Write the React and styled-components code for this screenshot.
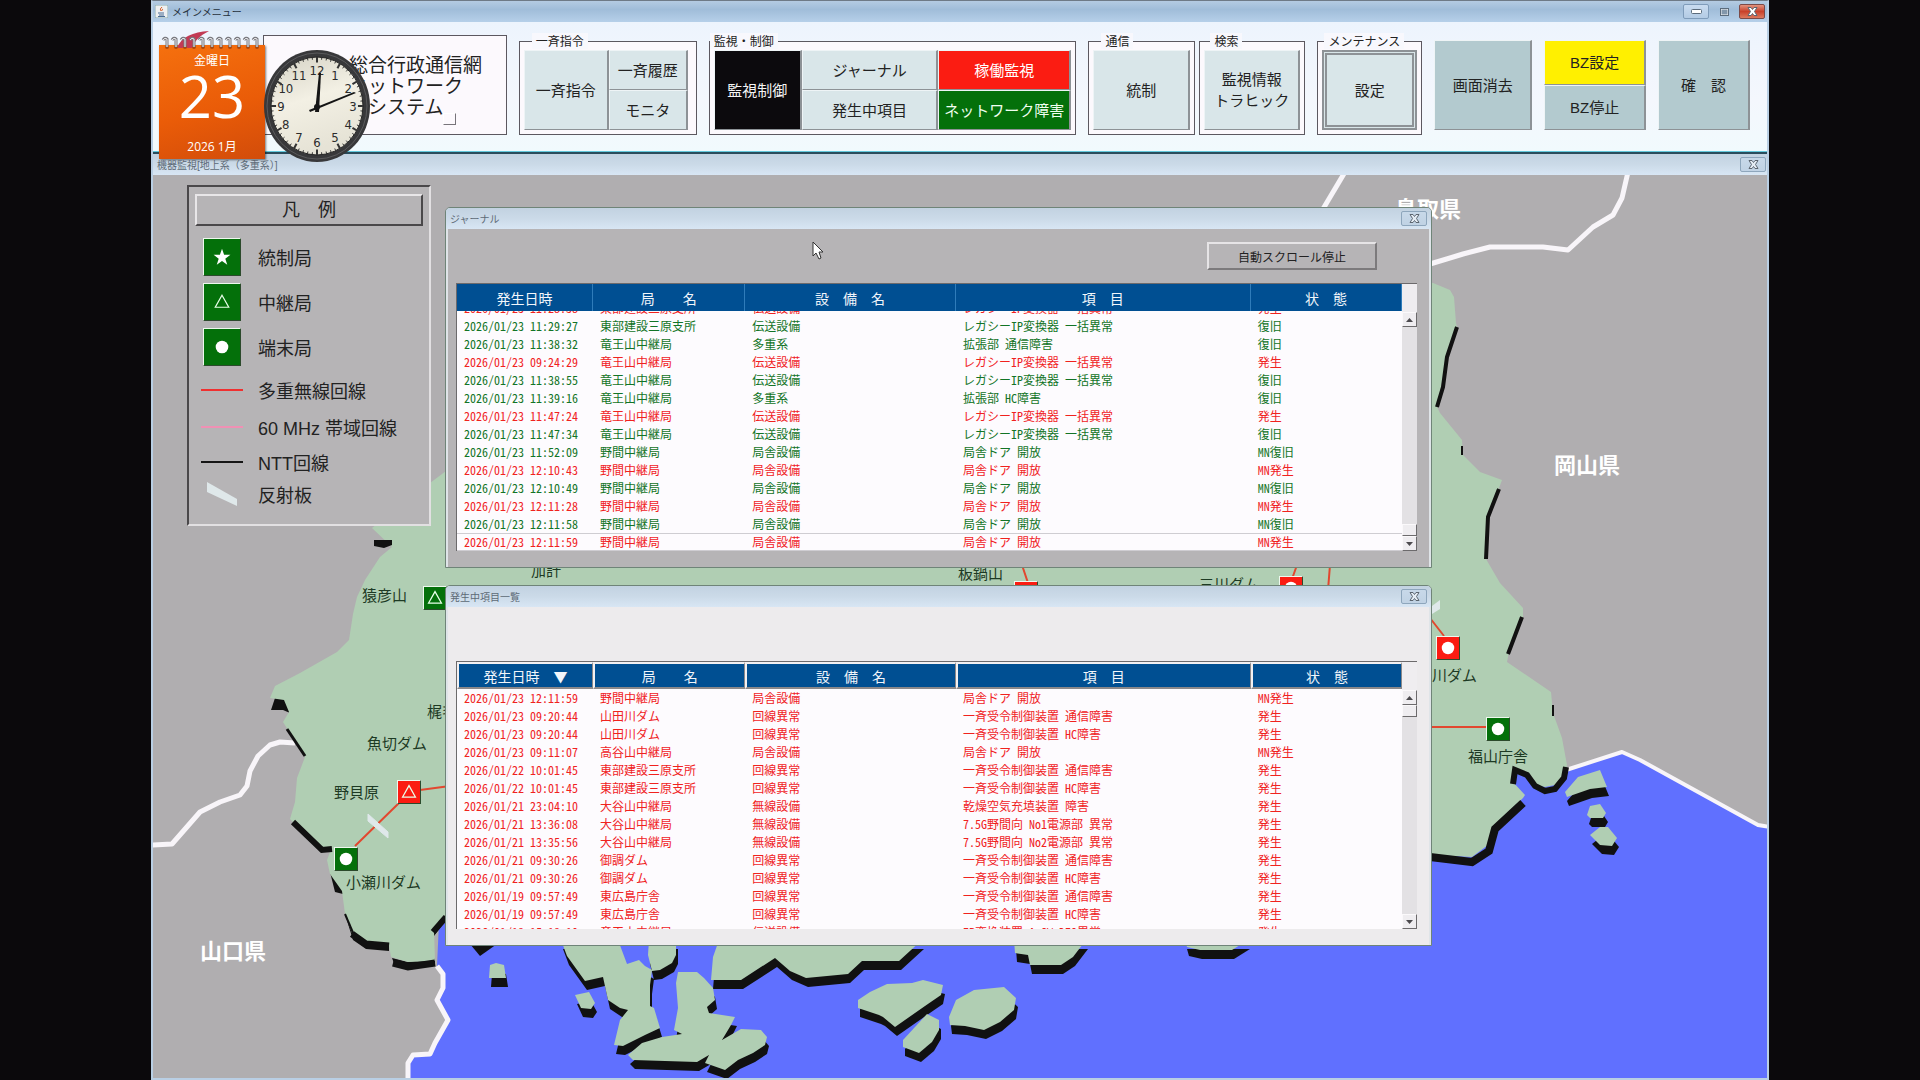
import React, { useEffect, useRef } from 'react'
import styled, { createGlobalStyle, css } from 'styled-components'

const GlobalStyle = createGlobalStyle`
  * { box-sizing: border-box; }
  body {
    margin: 0;
    background: #0b090c;
    color: #222;
    font-family: "Liberation Sans", "Noto Sans CJK JP", sans-serif;
  }
  button { font-family: inherit; color: inherit; padding: 0; margin: 0; }
`

const LAND = '#b0ceb3'
const SEA = '#6070ff'
const GREEN = '#04700a'
const RED = '#fb1c12'

/* ---------- shell ---------- */

const Shell = styled.div`
  position: relative;
  display: flex;
  flex-direction: column;
  width: calc(100% - 302px);
  height: 100vh;
  margin: 0 auto;
  border: 2px solid #b9cfe4;
  border-top: 1px solid #6e7a86;
  overflow: hidden;
`

const TitleBar = styled.header`
  display: flex;
  align-items: center;
  gap: 2px;
  flex: none;
  height: 21px;
  padding: 0 2px;
  font-size: 10px;
  color: #26313c;
  background: linear-gradient(#b4cbe2, #a0bdd9 40%, #b6d0e9);
`

const TitleText = styled.h1`
  flex: 1;
  margin: 0 0 0 2px;
  font-size: 10px;
  font-weight: 400;
`

const CaptionButton = styled.button`
  display: flex;
  align-items: center;
  justify-content: center;
  width: 26px;
  height: 15px;
  border: 1px solid ${(p) => (p.$close ? '#7c4a48' : p.$flat ? 'transparent' : '#7f9cba')};
  border-radius: 2px;
  background: ${(p) => (p.$close
    ? 'linear-gradient(#e2937f, #c8412b 50%, #dd7a5e)'
    : p.$flat ? 'transparent' : 'linear-gradient(#c9dcf0, #b3cbe4)')};
`

const CloseGlyph = ({ fill = '#fff', stroke = '#5c6670' }) => (
  <svg width="11" height="9" viewBox="0 0 11 9" aria-hidden="true">
    <path d="M1 .5h3l1.500 2 1.500-2h3L7.500 4.500l2.500 4H7L5.500 6.500 4 8.500H1l2.500-4z" fill={fill} stroke={stroke} strokeWidth="1" />
  </svg>
)

const Toolbar = styled.div`
  display: flex;
  align-items: flex-end;
  gap: 12px;
  flex: none;
  height: 132px;
  padding: 0 17px 17px 110px;
  background: linear-gradient(#edf4fd, #f4f7fd 60%, #f1fafd);
  border-bottom: 2px solid #2a4c5c;
  box-shadow: inset 0 -1px #62c8dc;
  white-space: nowrap;
`

const LogoBox = styled.div`
  position: relative;
  width: 244px;
  height: 100px;
  padding: 19px 0 0 85px;
  border: 1px solid #5c5860;
  background: #fcf9fd;
  font-size: 19px;
  line-height: 21px;
  white-space: pre;
`

// little unlabeled push button in the corner of the logo box
const CornerButton = styled.button`
  position: absolute;
  right: 50px;
  bottom: 9px;
  width: 13px;
  height: 12px;
  border: 1px solid;
  border-color: #fff #77747a #77747a #fff;
  background: #fcf9fd;
`

const Group = styled.fieldset`
  display: grid;
  grid-template-columns: ${(p) => p.$cols || '1fr'};
  width: ${(p) => p.$w}px;
  height: 102px;
  min-width: 0;
  margin: 0;
  padding: 1px ${(p) => p.$padRight || 4}px 4px 4px;
  border: 1px solid #5c5860;
  background: #fcf9fd;
`

const GroupLegend = styled.legend`
  margin-left: ${(p) => p.$indent || 6}px;
  padding: 2px 4px 0;
  font-size: 12px;
  line-height: 14px;
  background: #f8f8fd;
`

const PairRow = styled.div`
  display: flex;
  gap: 4px;
`

const SideButtons = styled.div`
  display: grid;
  width: ${(p) => p.$w}px;
  height: 90px;
  margin-bottom: 5px;
`

const tones = {
  pale: css`background: #d9e6e9;`,
  black: css`background: #0c0a0d; color: #f4f4f4;`,
  red: css`background: ${RED}; color: #fff;`,
  green: css`background: ${GREEN}; color: #f0fff0;`,
  teal: css`background: #b3cacf;`,
  yellow: css`background: #fff000;`,
}

const PanelButton = styled.button`
  grid-row: ${(p) => (p.$tall ? 'span 2' : 'auto')};
  border: 1px solid;
  border-color: #eef4f6 #8d9296 #8d9296 #eef4f6;
  border-right-width: 2px;
  font-size: 15px;
  line-height: 21px;
  white-space: pre-line;
  ${(p) => tones[p.$tone || 'pale']}
  ${(p) => p.$ridge && css`
    border: 5px double #8d9296;
  `}
`

/* ---------- gadgets ---------- */

const CalendarGadget = styled.section`
  position: absolute;
  left: 6px;
  top: 30px;
  width: 106px;
  height: 128px;
`

const CalendarRings = styled.svg`
  position: absolute;
  left: 0;
  top: 0;
`

const CalendarPage = styled.div`
  display: flex;
  flex-direction: column;
  align-items: center;
  height: 114px;
  margin-top: 14px;
  padding: 9px 0 5px;
  background: linear-gradient(165deg, #f5700e, #ea5c08 55%, #d24c0a);
  box-shadow: 1px 1px 2px rgba(0, 0, 0, 0.5);
  color: #fff;
  font-family: "Open Sans", "Noto Sans CJK JP", sans-serif;
  font-size: 12px;
  line-height: 14px;
`

const CalendarDay = styled.div`
  margin-bottom: auto;
  font-size: 58px;
  font-weight: 500;
  line-height: 56px;
`

const ClockGadget = styled.svg`
  position: absolute;
  left: 109px;
  top: 46px;
`

const Calendar = () => (
  <CalendarGadget>
    <CalendarPage>
      <span>金曜日</span>
      <CalendarDay>23</CalendarDay>
      <span>2026 1月</span>
    </CalendarPage>
    <CalendarRings width="106" height="20" viewBox="0 0 106 20" aria-hidden="true">
      <path d="M18 17C22 6 34 1 50 0 40 5 36 10 33 17z" fill="#c23a54" />
      {Array.from({ length: 11 }, (_, i) => (
        <g key={i} transform={`translate(${4 + i * 9} 6)`}>
          <circle cx="4" cy="10" r="2" fill="#a84810" />
          <path d="M0 3Q2 0 4 2V10" fill="none" stroke="#77777c" strokeWidth="3" />
          <path d="M0 3Q2 0 4 2V10" fill="none" stroke="#ececf0" strokeWidth="1" />
        </g>
      ))}
    </CalendarRings>
  </CalendarGadget>
)

const Clock = () => (
  <ClockGadget width="110" height="118" viewBox="0 0 110 118" role="img" aria-label="12:12">
    <defs>
      <linearGradient id="face" x1="0" y1="0" x2="0.300" y2="1">
        <stop offset="0" stopColor="#d6d3c6" />
        <stop offset="0.500" stopColor="#f3f0e4" />
        <stop offset="1" stopColor="#e6e3d6" />
      </linearGradient>
    </defs>
    <ellipse cx="55" cy="59" rx="53" ry="56" fill="#38383a" />
    <ellipse cx="55" cy="59" rx="50" ry="53" fill="none" stroke="#5a5a5c" strokeWidth="1" />
    <ellipse cx="55" cy="59" rx="46" ry="49" fill="url(#face)" stroke="#222" strokeWidth="1" />
    {Array.from({ length: 60 }, (_, i) => {
      const a = (i * Math.PI) / 30
      const r = i % 5 ? 0.95 : 0.89
      return (
        <line
          key={i}
          x1={55 + 46 * Math.sin(a)}
          y1={59 - 49 * Math.cos(a)}
          x2={55 + 46 * r * Math.sin(a)}
          y2={59 - 49 * r * Math.cos(a)}
          stroke="#333"
          strokeWidth={i % 5 ? 1 : 2}
        />
      )
    })}
    {Array.from({ length: 12 }, (_, i) => {
      const a = ((i + 1) * Math.PI) / 6
      return (
        <text
          key={i}
          x={55 + 36 * Math.sin(a)}
          y={64 - 36 * Math.cos(a)}
          textAnchor="middle"
          fontFamily='"DejaVu Sans Condensed", "Liberation Sans", sans-serif'
          fontSize="13"
          fill="#2c2c2c"
        >
          {i + 1}
        </text>
      )
    })}
    <path d="M53 65l4 0 2-39-2 0z" fill="#151515" />
    <path d="M47 63l1 2 46-19-2-1z" fill="#151515" />
    <circle cx="55" cy="60" r="3" fill="#151515" />
  </ClockGadget>
)

/* ---------- map ---------- */

const ChildTitle = styled.div`
  display: flex;
  align-items: center;
  flex: none;
  height: 21px;
  padding: 0 ${(p) => p.$edge || 4}px 0 4px;
  font-size: 10px;
  color: #5d6a76;
  background: linear-gradient(#c2d2e1, #cbdae8 50%, #d8e6f4);

  h2 {
    flex: 1;
    margin: 0;
    font-size: 10px;
    font-weight: 400;
  }
`

const MapArea = styled.main`
  position: relative;
  flex: 1;
  min-height: 0;
  overflow: hidden;
  background: #b0aeb0;
`

const MapCanvas = styled.svg`
  position: absolute;
  inset: 0;
  width: 100%;
  height: 100%;
`

const Node = styled.div`
  position: absolute;
  left: ${(p) => p.$x - 153}px;
  top: ${(p) => p.$y - 175}px;
`

const Place = styled(Node)`
  font-size: 15px;
  line-height: 18px;
  color: #1d3a24;
  white-space: nowrap;
`

const Prefecture = styled(Node)`
  font-size: 22px;
  line-height: 26px;
  font-weight: 700;
  color: #fff;
  white-space: nowrap;
`

const ISLANDS = [
  '490,965 496,963 504,965 506,978 489,978',
  '561,940 567,956 585,981 603,977 608,1000 620,1008 628,1010 620,1020 614,1045 623,1046 645,1035 660,1028 654,1008 650,1006 650,985 652,970 645,966 639,960 627,964 618,940',
  '649,940 648,955 652,971 660,970 672,963 676,955 676,940',
  '678,972 697,972 704,978 713,988 715,1000 707,1007 709,1013 735,1017 731,1025 722,1040 741,1029 761,1030 767,1037 765,1045 753,1053 738,1060 725,1070 705,1063 709,1055 697,1062 633,1060 628,1055 642,1043 662,1037 682,1034 674,1030 678,1008 676,983',
  '575,995 589,992 595,1003 591,1009 581,1008',
  '719,940 713,957 711,980 741,980 775,958 790,971 806,978 848,974 862,961 899,961 922,940',
  '858,1000 870,992 887,984 912,983 923,980 943,985 941,995 925,1006 895,1027 883,1017 879,1015 858,1008',
  '927,1014 939,1020 939,1030 932,1042 919,1053 903,1047 903,1040 915,1027',
  '974,990 1004,987 1016,998 1014,1010 1000,1022 984,1030 965,1026 950,1025 949,1017 956,1000',
  '1014,940 1015,953 1028,955 1030,965 1061,965 1073,957 1086,940',
  '1185,940 1187,947 1200,950 1232,950 1248,940',
  '1565,792 1578,777 1600,770 1607,787 1590,789 1567,797',
  '1587,815 1590,806 1600,804 1606,813 1603,818 1590,818',
  '1590,835 1600,827 1608,827 1617,838 1612,846 1600,845',
]

const MAINLAND = 'M446 471L430 483 372 528 392 547 380 557 365 580 357 597 353 614 349 640 337 652 300 673 275 686 270 698 284 700 289 712 283 722 305 757 297 778 295 802 290 819 322 852 332 847 327 860 330 874 342 891 345 914 352 933 366 943 389 945 391 957 408 962 435 961 434 931 446 914 480 938 1433 855 1472 857 1488 845 1495 825 1523 798 1525 795 1513 782 1515 770 1527 773 1535 785 1545 787 1555 785 1563 776 1567 765 1562 738 1553 713 1551 692 1507 662 1509 652 1523 617 1523 608 1500 583 1486 559 1488 517 1502 480 1480 472 1463 455 1462 440 1440 413 1437 407 1447 357 1457 327 1456 323 1454 297 1450 290 1433 283 1000 250z'

const RegionMap = () => (
  <MapCanvas viewBox="153 175 1614 904" preserveAspectRatio="xMinYMin slice" aria-hidden="true">
    <path d="M440 900L437 966 443 974 443 988 437 1000 448 1020 435 1043 430 1054 413 1055 408 1063 408 1085H1775V827L1758 825 1640 760 1622 752 1568 770 1400 780z" fill={SEA} />
    <g fill="none" stroke="#f8f5f9" strokeWidth="5" strokeLinejoin="round">
      <path d="M152 845L172 844 200 812 220 802 240 795 247 786 250 771 258 756 270 745 280 742 295 743" />
      <path d="M437 966L443 974 443 988 437 1000 448 1020 435 1043 430 1054 413 1055 408 1063 408 1080" />
      <path d="M1345 172L1323 209" />
      <path d="M1628 172L1622 198 1613 215 1593 227 1568 250 1543 247 1490 247 1463 254 1430 264" />
      <path d="M1566 770L1622 752 1640 760 1758 825 1770 827" strokeWidth="4" />
    </g>
    <g fill="#111" stroke="none">
      <path d="M271 710L275 698 286 698 290 713 283 710z" />
      <path d="M345 914L353 931 367 940 389 942V951L366 949 353 940z" />
      <path d="M392 958L408 962 435 958V965L408 970 395 966z" />
      <path d="M330 872L343 886V894L335 892z" />
      <path d="M470 944H497L480 956z" />
      <path d="M433 926L446 905V920L434 936z" />
    </g>
    <path d={MAINLAND} fill={LAND} />
    <g fill="none" stroke="#111" strokeWidth="4">
      <path d="M287 729L305 756" strokeWidth="3" />
      <path d="M293 822L322 850 332 849" strokeWidth="6" />
      <path d="M433 932L446 917" strokeWidth="6" />
      <path d="M352 934L366 944 389 946M393 963L408 967 435 963" strokeWidth="7" />
      <path d="M345 914L354 935" strokeWidth="2" />
      <path d="M1457 327L1447 357 1443 387 1437 407M1499 489L1488 517 1486 559M1522 617L1508 654" />
      <path d="M1462 446V455M1553 705V716" strokeWidth="2" />
      <path d="M1566 767L1564 778 1555 789 1545 791 1535 786 1527 775 1515 770 1513 784" strokeWidth="6" />
      <path d="M1523 803L1495 829 1489 851 1472 862 1430 857" strokeWidth="8" />
    </g>
    <path d="M374 540H392V545L384 548 374 546z" fill="#111" />
    <g fill="#111" transform="translate(2 9)">
      {ISLANDS.map((pts) => <polygon key={pts} points={pts} />)}
    </g>
    <g fill={LAND}>
      {ISLANDS.map((pts) => <polygon key={pts} points={pts} />)}
    </g>
    <g stroke="#e2472f" strokeWidth="2">
      <path d="M355 846L399 803M420 790L450 786M1430 727H1487M1430 618L1444 636M1022 565L1028 583M1297 565L1292 579M1330 565L1328 590" fill="none" />
    </g>
    <path d="M368 814L388 832V838L368 821z" fill="#dfe8ea" stroke="#dfe8ea" />
    <path d="M1432 606L1440 600V609L1432 614z" fill="#dfe8ea" />
  </MapCanvas>
)

const StationFrame = styled.svg`
  display: block;
  flex: none;
  width: ${(p) => p.$size}px;
  height: ${(p) => p.$size}px;
  border: 1px solid;
  border-color: #eef8ee #2c4a2c #2c4a2c #eef8ee;
  background: ${(p) => (p.$alarm ? RED : GREEN)};
`

const Station = ({ kind, alarm, size = 24 }) => {
  const large = size > 30
  return (
    <StationFrame viewBox="0 0 24 24" $size={size} $alarm={alarm} aria-hidden="true">
      {kind === 'star' && <path d="M12 6.500l1.400 4h4.200l-3.400 2.600 1.300 4.100-3.500-2.500-3.500 2.500 1.300-4.100L6.400 10.500h4.200z" fill="#fff" />}
      {kind === 'triangle' && (
        <path d={large ? 'M12 7.500L16.500 15.500H7.500z' : 'M12 5L19 17.500H5z'} fill="none" stroke="#eaffea" strokeWidth={large ? 0.8 : 1.4} />
      )}
      {kind === 'circle' && <circle cx="12" cy="12" r={large ? 4.2 : 6.8} fill="#fff" />}
    </StationFrame>
  )
}

/* ---------- legend panel ---------- */

const LegendPanel = styled.aside`
  position: absolute;
  left: 34px;
  top: 10px;
  width: 244px;
  padding: 7px 6px 17px;
  border: 2px solid;
  border-color: #4a484a #e2e0e2 #e2e0e2 #4a484a;
  background: #b6b4b6;
`

const LegendTitle = styled.h3`
  margin: 0 0 8px;
  border: 2px solid;
  border-color: #e8e6e8 #4a484a #4a484a #e8e6e8;
  font-size: 18px;
  font-weight: 400;
  line-height: 28px;
  text-align: center;
`

const LegendRow = styled.div`
  display: grid;
  grid-template-columns: 42px 1fr;
  align-items: center;
  column-gap: 15px;
  height: ${(p) => p.$h}px;
  padding-left: 6px;
  font-size: 18px;
  white-space: nowrap;
`

const LineSample = styled.span`
  height: 2px;
  background: ${(p) => p.$color};
`

const Centered = styled.span`
  display: flex;
  justify-content: center;
`

const Legend = () => (
  <LegendPanel>
    <LegendTitle>凡　例</LegendTitle>
    <LegendRow $h={45}><Centered><Station kind="star" size={38} /></Centered>統制局</LegendRow>
    <LegendRow $h={45}><Centered><Station kind="triangle" size={38} /></Centered>中継局</LegendRow>
    <LegendRow $h={45}><Centered><Station kind="circle" size={38} /></Centered>端末局</LegendRow>
    <LegendRow $h={41}><LineSample $color="#f03030" />多重無線回線</LegendRow>
    <LegendRow $h={34}><LineSample $color="#f090b4" />60 MHz 帯域回線</LegendRow>
    <LegendRow $h={36}><LineSample $color="#151515" />NTT回線</LegendRow>
    <LegendRow $h={27}>
      <Centered>
        <svg width="32" height="26" viewBox="0 0 32 26" aria-hidden="true">
          <path d="M1 1L31 18V25L1 11z" fill="#dfe8ea" />
        </svg>
      </Centered>
      反射板
    </LegendRow>
  </LegendPanel>
)

/* ---------- floating windows ---------- */

const WindowFrame = styled.section`
  position: absolute;
  left: 292px;
  top: ${(p) => p.$top}px;
  width: 987px;
  border: 1px solid #6f8478;
  border-radius: 5px 5px 0 0;
  overflow: hidden;
  background: ${(p) => (p.$light ? '#edebed' : '#b6b4b6')};
  box-shadow: inset -2px 0 #dfe4e8, inset 2px 0 #dfe4e8;
`

const WindowTools = styled.div`
  display: flex;
  align-items: center;
  justify-content: flex-end;
  height: 54px;
  padding-right: 54px;
`

const ScrollStopButton = styled.button`
  width: 170px;
  height: 28px;
  border: 2px solid;
  border-color: #e6e4e6 #7c7a7c #7c7a7c #e6e4e6;
  background: #b6b4b6;
  font-size: 12px;
`

const ListFrame = styled.div`
  display: flex;
  height: 268px;
  margin: 0 14px 16px 10px;
  border-left: 1px solid #6c6a6c;
  border-top: 1px solid #6c6a6c;
`

const Scroller = styled.div`
  flex: 1;
  overflow: hidden;
  background: #fdfbfe;
`

const Grid = styled.table`
  width: 100%;
  table-layout: fixed;
  border-collapse: separate;
  border-spacing: 0;
  font-family: "Noto Sans Mono CJK JP", "Noto Sans CJK JP", sans-serif;
  font-size: 12px;
  line-height: 18px;

  th {
    position: sticky;
    top: 0;
    height: 27px;
    padding: 0;
    font-size: 14px;
    font-weight: 400;
    line-height: 22px;
    color: #f2f6fb;
    background: #004f92;
    border-right: 1px solid #2f7cba;
    white-space: pre;
    ${(p) => p.$raised && css`
      border: 2px solid;
      border-color: #f2f0f2 #8a888a #8a888a #f2f0f2;
      border-right-width: 1px;
    `}
  }

  td {
    height: 18px;
    padding: 0 0 0 7px;
    white-space: nowrap;
  }
`

const Row = styled.tr`
  color: ${(p) => (p.$ok ? '#127426' : '#f0221e')};
  td {
    ${(p) => p.$current && css`
      box-shadow: inset 0 1px #cfcdd2, inset 0 -1px #cfcdd2;
    `}
  }
`

const ScrollBar = styled.div`
  display: flex;
  flex-direction: column;
  width: 15px;
  padding-top: 28px;
  background: linear-gradient(#efedf0 28px, #e3e1e4 28px);
`

const ScrollArrow = styled.button`
  display: flex;
  align-items: center;
  justify-content: center;
  width: 15px;
  height: 15px;
  border: 1px solid;
  border-color: #fbf9fb #6c6a6c #6c6a6c #fbf9fb;
  background: #efedf0;
`

const Arrow = ({ down }) => (
  <svg width="7" height="4" viewBox="0 0 7 4" aria-hidden="true">
    <path d={down ? 'M0 0H7L3.500 4z' : 'M0 4H7L3.500 0z'} fill="#4c4a4e" />
  </svg>
)

const Thumb = styled.div`
  height: 12px;
  margin-top: ${(p) => (p.$end ? 'auto' : 0)};
  margin-bottom: ${(p) => (p.$end ? 0 : 'auto')};
  border: 1px solid;
  border-color: #fbf9fb #6c6a6c #6c6a6c #fbf9fb;
  background: #efedf0;
`

const CloseButton = styled(CaptionButton)`
  background: linear-gradient(#c8d9e9, #c0d2e4);
  border-color: #8ea6bc;
`

const EventList = ({ rows, sorted, scroll }) => {
  const ref = useRef(null)

  useEffect(() => {
    if (scroll) ref.current.scrollTop = ref.current.scrollHeight
  }, [scroll])

  return (
    <ListFrame>
      <Scroller ref={ref}>
        <Grid $raised={sorted}>
          <colgroup>
            <col style={{ width: '14.4%' }} />
            <col style={{ width: '16.1%' }} />
            <col style={{ width: '22.3%' }} />
            <col style={{ width: '31.2%' }} />
            <col style={{ width: '16%' }} />
          </colgroup>
          <thead>
            <tr>
              <th>{sorted ? '発生日時　▼' : '発生日時'}</th>
              <th>局　　名</th>
              <th>設　備　名</th>
              <th>項　目</th>
              <th>状　態</th>
            </tr>
          </thead>
          <tbody>
            {rows.map((r, i) => (
              <Row key={i} $ok={r[4].includes('復旧')} $current={scroll && i === rows.length - 1}>
                {r.map((cell, c) => <td key={c}>{cell}</td>)}
              </Row>
            ))}
          </tbody>
        </Grid>
      </Scroller>
      <ScrollBar>
        <ScrollArrow aria-label="上へ"><Arrow /></ScrollArrow>
        <Thumb $end={scroll} />
        <ScrollArrow aria-label="下へ"><Arrow down /></ScrollArrow>
      </ScrollBar>
    </ListFrame>
  )
}

const LEGACY = 'レガシーIP変換器 一括異常'
const DOOR = '局舎ドア 開放'
const RECV = '一斉受令制御装置 通信障害'
const RECV_HC = '一斉受令制御装置 HC障害'

const journal = [
  ['2026/01/23 11:28:38', '東部建設三原支所', '伝送設備', LEGACY, '発生'],
  ['2026/01/23 11:29:27', '東部建設三原支所', '伝送設備', LEGACY, '復旧'],
  ['2026/01/23 11:38:32', '竜王山中継局', '多重系', '拡張部 通信障害', '復旧'],
  ['2026/01/23 09:24:29', '竜王山中継局', '伝送設備', LEGACY, '発生'],
  ['2026/01/23 11:38:55', '竜王山中継局', '伝送設備', LEGACY, '復旧'],
  ['2026/01/23 11:39:16', '竜王山中継局', '多重系', '拡張部 HC障害', '復旧'],
  ['2026/01/23 11:47:24', '竜王山中継局', '伝送設備', LEGACY, '発生'],
  ['2026/01/23 11:47:34', '竜王山中継局', '伝送設備', LEGACY, '復旧'],
  ['2026/01/23 11:52:09', '野間中継局', '局舎設備', DOOR, 'MN復旧'],
  ['2026/01/23 12:10:43', '野間中継局', '局舎設備', DOOR, 'MN発生'],
  ['2026/01/23 12:10:49', '野間中継局', '局舎設備', DOOR, 'MN復旧'],
  ['2026/01/23 12:11:28', '野間中継局', '局舎設備', DOOR, 'MN発生'],
  ['2026/01/23 12:11:58', '野間中継局', '局舎設備', DOOR, 'MN復旧'],
  ['2026/01/23 12:11:59', '野間中継局', '局舎設備', DOOR, 'MN発生'],
]

const active = [
  ['2026/01/23 12:11:59', '野間中継局', '局舎設備', DOOR, 'MN発生'],
  ['2026/01/23 09:20:44', '山田川ダム', '回線異常', RECV, '発生'],
  ['2026/01/23 09:20:44', '山田川ダム', '回線異常', RECV_HC, '発生'],
  ['2026/01/23 09:11:07', '高谷山中継局', '局舎設備', DOOR, 'MN発生'],
  ['2026/01/22 10:01:45', '東部建設三原支所', '回線異常', RECV, '発生'],
  ['2026/01/22 10:01:45', '東部建設三原支所', '回線異常', RECV_HC, '発生'],
  ['2026/01/21 23:04:10', '大谷山中継局', '無線設備', '乾燥空気充填装置 障害', '発生'],
  ['2026/01/21 13:36:08', '大谷山中継局', '無線設備', '7.5G野間向 No1電源部 異常', '発生'],
  ['2026/01/21 13:35:56', '大谷山中継局', '無線設備', '7.5G野間向 No2電源部 異常', '発生'],
  ['2026/01/21 09:30:26', '御調ダム', '回線異常', RECV, '発生'],
  ['2026/01/21 09:30:26', '御調ダム', '回線異常', RECV_HC, '発生'],
  ['2026/01/19 09:57:49', '東広島庁舎', '回線異常', RECV, '発生'],
  ['2026/01/19 09:57:49', '東広島庁舎', '回線異常', RECV_HC, '発生'],
  ['2026/01/18 15:18:10', '竜王山中継局', '伝送設備', 'IP変換装置 A-SW DIO異常', '発生'],
]

const Pointer = styled.svg`
  position: absolute;
  left: 659px;
  top: 66px;
`

const App = () => (
  <>
    <GlobalStyle />
    <Shell>
      <TitleBar>
        <svg width="13" height="13" viewBox="0 0 13 13" aria-hidden="true">
          <rect width="13" height="13" fill="#eef0f2" stroke="#8aa" />
          <path d="M7 2Q4 4 6 6M8 4Q6 5 7 6" stroke="#d9622b" fill="none" />
          <path d="M3 8H9M4 10H9M3 11.500H10" stroke="#4a6c94" />
        </svg>
        <TitleText>メインメニュー</TitleText>
        <CaptionButton aria-label="最小化">
          <svg width="11" height="5" aria-hidden="true"><rect x=".5" y=".5" width="10" height="4" rx="1" fill="#fff" stroke="#5c6c7c" /></svg>
        </CaptionButton>
        <CaptionButton $flat aria-label="最大化">
          <svg width="9" height="8" aria-hidden="true"><rect x="1" y="1" width="7" height="6" fill="#8297ab" stroke="#f8f8f8" /><rect x=".5" y=".5" width="8" height="7" fill="none" stroke="#5c6c7c" /></svg>
        </CaptionButton>
        <CaptionButton $close aria-label="閉じる"><CloseGlyph /></CaptionButton>
      </TitleBar>

      <Toolbar>
        <LogoBox>
          {'総合行政通信網\nネットワーク\n　システム'}
          <CornerButton aria-label="詳細" />
        </LogoBox>
        <Group $w={178} $cols="85px 1fr" $padRight={8}>
          <GroupLegend $indent={8}>一斉指令</GroupLegend>
          <PanelButton $tall>一斉指令</PanelButton>
          <PanelButton>一斉履歴</PanelButton>
          <PanelButton>モニタ</PanelButton>
        </Group>
        <Group $w={368} $cols="88px 1fr 133px">
          <GroupLegend $indent={-4}>監視・制御</GroupLegend>
          <PanelButton $tall $tone="black">監視制御</PanelButton>
          <PanelButton>ジャーナル</PanelButton>
          <PanelButton $tone="red">稼働監視</PanelButton>
          <PanelButton>発生中項目</PanelButton>
          <PanelButton $tone="green">ネットワーク障害</PanelButton>
        </Group>
        <PairRow>
          <Group $w={107}>
            <GroupLegend $indent={8}>通信</GroupLegend>
            <PanelButton>統制</PanelButton>
          </Group>
          <Group $w={106}>
            <GroupLegend>検索</GroupLegend>
            <PanelButton>{'監視情報\nトラヒック'}</PanelButton>
          </Group>
        </PairRow>
        <Group $w={105}>
          <GroupLegend $indent={2}>メンテナンス</GroupLegend>
          <PanelButton $ridge>設定</PanelButton>
        </Group>
        <SideButtons $w={98}>
          <PanelButton $tone="teal">画面消去</PanelButton>
        </SideButtons>
        <SideButtons $w={102}>
          <PanelButton $tone="yellow">BZ設定</PanelButton>
          <PanelButton $tone="teal">BZ停止</PanelButton>
        </SideButtons>
        <SideButtons $w={92}>
          <PanelButton $tone="teal">確　認</PanelButton>
        </SideButtons>
      </Toolbar>

      <ChildTitle $edge={1}>
        <h2>機器監視[地上系（多重系）]</h2>
        <CloseButton aria-label="閉じる"><CloseGlyph fill="#e4ecf4" /></CloseButton>
      </ChildTitle>

      <MapArea>
        <RegionMap />
        <Prefecture $x={1395} $y={197}>鳥取県</Prefecture>
        <Prefecture $x={1554} $y={453}>岡山県</Prefecture>
        <Prefecture $x={200} $y={939}>山口県</Prefecture>
        <Place $x={362} $y={587}>猿彦山</Place>
        <Place $x={427} $y={703}>梶毛</Place>
        <Place $x={367} $y={735}>魚切ダム</Place>
        <Place $x={334} $y={784}>野貝原</Place>
        <Place $x={346} $y={874}>小瀬川ダム</Place>
        <Place $x={531} $y={562}>加計</Place>
        <Place $x={958} $y={565}>板鍋山</Place>
        <Place $x={1199} $y={576}>三川ダム</Place>
        <Place $x={1402} $y={667}>山田川ダム</Place>
        <Place $x={1468} $y={748}>福山庁舎</Place>
        <Node $x={423} $y={586}><Station kind="triangle" /></Node>
        <Node $x={397} $y={780}><Station kind="triangle" alarm /></Node>
        <Node $x={334} $y={847}><Station kind="circle" /></Node>
        <Node $x={1014} $y={581}><Station kind="triangle" alarm /></Node>
        <Node $x={1279} $y={576}><Station kind="circle" alarm /></Node>
        <Node $x={1436} $y={636}><Station kind="circle" alarm /></Node>
        <Node $x={1486} $y={717}><Station kind="circle" /></Node>

        <Legend />

        <WindowFrame $top={32}>
          <ChildTitle>
            <h2>ジャーナル</h2>
            <CloseButton aria-label="閉じる"><CloseGlyph fill="#e4ecf4" /></CloseButton>
          </ChildTitle>
          <WindowTools>
            <ScrollStopButton>自動スクロール停止</ScrollStopButton>
          </WindowTools>
          <EventList rows={journal} scroll />
        </WindowFrame>

        <WindowFrame $top={410} $light>
          <ChildTitle>
            <h2>発生中項目一覧</h2>
            <CloseButton aria-label="閉じる"><CloseGlyph fill="#e4ecf4" /></CloseButton>
          </ChildTitle>
          <WindowTools />
          <EventList rows={active} sorted />
        </WindowFrame>

        <Pointer width="13" height="20" viewBox="0 0 13 20" aria-hidden="true">
          <path d="M1 1V15L4 12 7 18 9 17 7 11H11z" fill="#fff" stroke="#333" />
        </Pointer>
      </MapArea>

      <Calendar />
      <Clock />
    </Shell>
  </>
)

export default App
